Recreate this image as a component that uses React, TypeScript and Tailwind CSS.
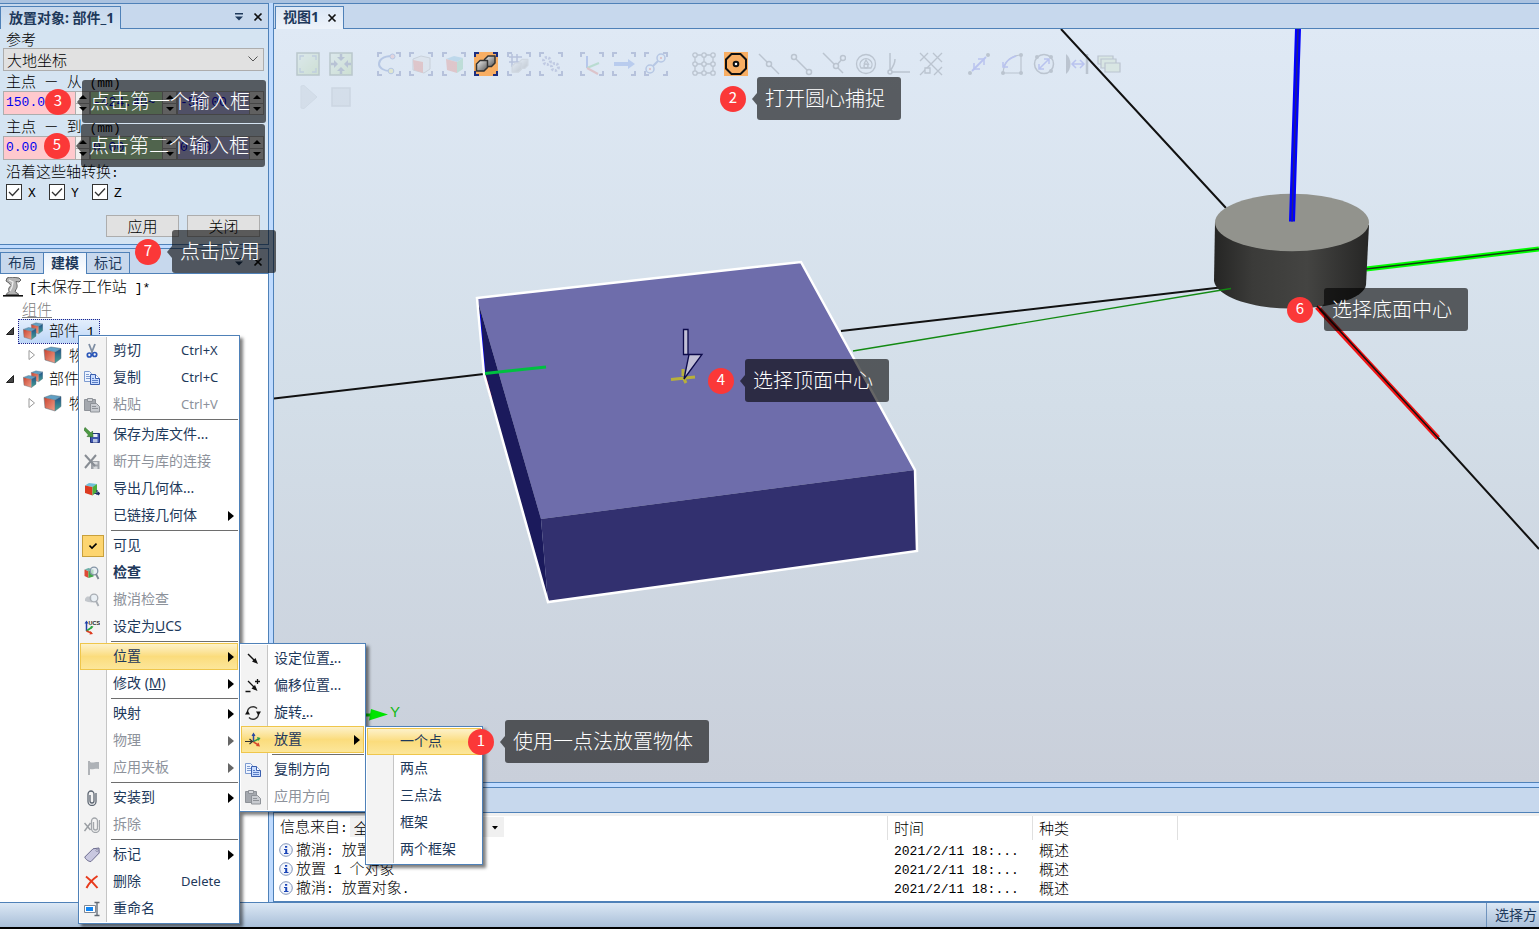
import { ReactNode } from 'react';
import clsx from 'clsx';

/* ---------- text ---------- */

// Chinese text with the latin runs set in a half-width monospace
function Song({ text }: { text: string }) {
    const parts = text.split(/([\x20-\x7e]+)/).filter(Boolean);
    return (
        <span className="whitespace-pre text-[15px] font-light font-['Noto_Sans_CJK_SC',sans-serif]">
            {parts.map((part, i) =>
                /^[\x20-\x7e]/.test(part) ? (
                    <span key={i} className="text-[13px] font-['Liberation_Mono',monospace]">{part}</span>
                ) : (
                    part
                )
            )}
        </span>
    );
}

/* ---------- menu icons ---------- */

function Svg({ children }: { children: ReactNode }) {
    return (
        <svg viewBox="0 0 16 16" className="mr-0.5 size-4 shrink-0" fill="none" aria-hidden="true">
            {children}
        </svg>
    );
}

const CutIcon = () => (
    <Svg>
        <path d="M5 1l3.5 9M11 1L7.5 10" stroke="#7f8ea3" strokeWidth="1.8" />
        <circle cx="5.3" cy="12" r="2" stroke="#2b57b8" strokeWidth="1.7" />
        <circle cx="10.7" cy="11.5" r="2" stroke="#2b57b8" strokeWidth="1.7" />
    </Svg>
);

const CopyIcon = () => (
    <Svg>
        <path d="M.5 1.500h5l2 2v8h-7z" fill="#eef4ff" stroke="#7d9bd0" />
        <path d="M2 4.500h3M2 6.500h4M2 8.500h4" stroke="#7d9bd0" />
        <path d="M6.500 4.500h5l4 4v6h-9z" fill="#c9dcff" stroke="#3a5fae" />
        <path d="M11.500 4.500v4h4" fill="#fff" stroke="#3a5fae" />
        <path d="M8 8.500h2M8 10.500h6M8 12.500h6" stroke="#5c7fc6" />
    </Svg>
);

const PasteIcon = () => (
    <Svg>
        <path d="M.5 2.500h11v11H.5z" fill="#a4a8ae" stroke="#8e9298" />
        <path d="M3.500 1.500h5v3h-5z" fill="#d4d6da" stroke="#8e9298" />
        <path d="M6.500 6.500h6l3 3v5.500h-9z" fill="#c8cbd0" stroke="#8e9298" />
        <path d="M8 9.500h4M8 11.500h6" stroke="#8e9298" />
    </Svg>
);

const SaveLibIcon = () => (
    <Svg>
        <path d="M6.500 6.500h9v9h-9z" fill="#3e55ad" stroke="#22347c" />
        <path d="M8.500 7h5v3h-5z" fill="#e7edf8" />
        <path d="M9 12h4.500v3.500H9z" fill="#b8c4e4" />
        <path d="M1 .5l6 5.500 1.500-2 .5 6-6-.5 1.500-1.500L0 3z" fill="#4d9a42" stroke="#2f6d28" strokeWidth=".6" />
    </Svg>
);

const UnlinkIcon = () => (
    <Svg>
        <path d="M7 7h8.500v8H7z" fill="#9ea2a8" />
        <path d="M9 8h4.500v2.500H9zM9.500 12.500h4v2.500h-4z" fill="#d9dbde" />
        <path d="M1 1l10 11M12 1L1 14" stroke="#888d94" strokeWidth="2" />
    </Svg>
);

const ExportIcon = () => (
    <Svg>
        <path d="M1 4.500L5 2l8 1-4 3z" fill="#6fc0d8" />
        <path d="M1 4.500L8.500 6v8.500L1 12z" fill="#dc3a20" />
        <path d="M8.500 6L13 3v8l-4.500 3.500z" fill="#4cae3b" />
        <path d="M13 9v5M10.500 12.500h5M14 11l1.500 1.500L14 14" stroke="#1d2f66" strokeWidth="1.200" />
    </Svg>
);

const CheckBoxIcon = () => (
    <span className="flex size-[22px] items-center justify-center border border-[#c8a03c] bg-[#fdd570]">
        <svg viewBox="0 0 8 8" className="size-2" fill="none" aria-hidden="true">
            <path d="M.5 3.500L3 6l4.500-4.500" stroke="#000" strokeWidth="1.6" />
        </svg>
    </span>
);

const ExamineIcon = ({ gray = false }: { gray?: boolean }) => (
    <Svg>
        {gray ? (
            <path d="M1 6.500l2-2h5v6l-4-.5-3-1z" fill="#c3c7cc" />
        ) : (
            <>
                <path d="M.5 4.500L4.500 6v7l-4-2z" fill="#df4a35" />
                <path d="M4.500 6l5-1.500v7L4.500 13z" fill="#42a948" />
                <path d="M.5 4.500l4-1.500 5 1.500-5 1.500z" fill="#6fb0a8" />
            </>
        )}
        <circle cx="10" cy="6" r="3.800" fill="#e4ecf4" fillOpacity=".7" stroke={gray ? '#a9aeb4' : '#8495a6'} strokeWidth="1.300" />
        <path d="M12 9l2.500 5" stroke={gray ? '#a9aeb4' : '#7d8791'} strokeWidth="1.800" />
    </Svg>
);

const UcsIcon = () => (
    <Svg>
        <path d="M2.500 3v9" stroke="#1f3fa8" strokeWidth="1.500" />
        <path d="M.5 4.500L2.500 1.500l2 3z" fill="#1f3fa8" />
        <path d="M2.500 12l5-3.500" stroke="#27a33d" strokeWidth="1.600" />
        <path d="M6.500 6.800l3 .7-2 2.500z" fill="#27a33d" />
        <path d="M2.500 12l5 2" stroke="#dd3b20" strokeWidth="1.600" />
        <path d="M6.500 12l2.500 3-3.500.5z" fill="#dd3b20" />
        <text x="4.500" y="5.500" fontSize="5.500" fontWeight="700" fill="#222" fontFamily="Liberation Sans, sans-serif">UCS</text>
    </Svg>
);

const FlagIcon = () => (
    <Svg>
        <path d="M5 1v14" stroke="#9a9ea3" strokeWidth="1.500" />
        <path d="M6 2c3 1.500 5-.5 9 0v7c-4-1-6 1-9 0z" fill="#aeb2b7" />
    </Svg>
);

const ClipIcon = ({ gray = false }: { gray?: boolean }) => (
    <Svg>
        <path
            d="M6 5v6a2 2 0 0 0 4 0V4a3 3 0 0 0-6 0v7.500a4 4 0 0 0 8 0V3"
            transform={gray ? 'translate(3.500 0)' : undefined}
            stroke={gray ? '#a2a6ab' : '#5d6672'}
            strokeWidth="1.300"
        />
        {gray && <path d="M.5 6l6 7M6.500 6l-6 8" stroke="#9a9ea3" strokeWidth="1.500" />}
    </Svg>
);

const TagIcon = () => (
    <Svg>
        <path d="M.8 10L9 1.800 15 1l.2 5L7 14.500c-2 .5-6-2.500-6.200-4.500z" fill="#c9c8e0" stroke="#6a6a8c" />
        <circle cx="13" cy="3.500" r="1" fill="#fff" stroke="#6a6a8c" strokeWidth=".7" />
    </Svg>
);

const DeleteIcon = () => (
    <Svg>
        <path d="M2 2.500c4 3 8 7 11.500 11.500M13.500 2C9 5 5 9 2.500 14" stroke="#e83a1c" strokeWidth="2" />
    </Svg>
);

const RenameIcon = () => (
    <Svg>
        <path d="M.5 4.500h11v7H.5z" fill="#fff" stroke="#7d8794" />
        <path d="M2 6h7v4H2z" fill="#1086f5" />
        <path d="M10.500 1.500h5M10.500 14.500h5M13 1.500v13" stroke="#5f6873" strokeWidth="1.300" />
    </Svg>
);

const SetPosIcon = () => (
    <Svg>
        <path d="M3 3l7 7" stroke="#111" strokeWidth="1.400" />
        <path d="M13 13l-6-2.500L10.500 7z" fill="#111" />
    </Svg>
);

const OffsetPosIcon = () => (
    <Svg>
        <path d="M3 3l6 6M.5 13.500h5M10 3.500h5M12.500 1v5" stroke="#111" strokeWidth="1.300" />
        <path d="M12.500 13l-6-2.500L10 7z" fill="#111" />
    </Svg>
);

const RotateIcon = () => (
    <Svg>
        <path d="M2.500 7.500a5.500 5.500 0 0 1 9.500-4M13.500 8.500a5.500 5.500 0 0 1-9.500 4" stroke="#333" strokeWidth="1.400" />
        <path d="M0 9.500L2.500 5.500 5 9.500zM11 6.500L13.500 10.500 16 6.500z" fill="#111" />
    </Svg>
);

const PlaceIcon = () => (
    <Svg>
        <path d="M8.500 2v8" stroke="#2d4aa0" strokeWidth="1.500" />
        <path d="M6.500 4l2-3.500 2 3.500z" fill="#2d4aa0" />
        <path d="M8.500 9.500l5-2.500" stroke="#2c9a48" strokeWidth="1.500" />
        <path d="M12 5l3.500 1-2 3z" fill="#2c9a48" />
        <path d="M8.500 10l5 3" stroke="#d7472b" strokeWidth="1.500" />
        <path d="M13.500 10.500l1.500 4-4-.5z" fill="#d7472b" />
        <path d="M0 9.500h7M4.500 7l3 2.500-3 2.500" stroke="#333" strokeWidth="1.200" />
    </Svg>
);

/* ---------- menus ---------- */

interface Item {
    label: ReactNode;
    icon?: ReactNode;
    keys?: string;
    sub?: boolean;
    disabled?: boolean;
    active?: boolean;
    bold?: boolean;
}

const SEP = 'sep';

const contextMenu: (Item | typeof SEP)[] = [
    { label: '剪切', keys: 'Ctrl+X', icon: <CutIcon /> },
    { label: '复制', keys: 'Ctrl+C', icon: <CopyIcon /> },
    { label: '粘贴', keys: 'Ctrl+V', icon: <PasteIcon />, disabled: true },
    SEP,
    { label: '保存为库文件...', icon: <SaveLibIcon /> },
    { label: '断开与库的连接', icon: <UnlinkIcon />, disabled: true },
    { label: '导出几何体...', icon: <ExportIcon /> },
    { label: '已链接几何体', sub: true },
    SEP,
    { label: '可见', icon: <CheckBoxIcon /> },
    { label: '检查', icon: <ExamineIcon />, bold: true },
    { label: '撤消检查', icon: <ExamineIcon gray />, disabled: true },
    { label: <>设定为<u>U</u>CS</>, icon: <UcsIcon /> },
    SEP,
    { label: '位置', sub: true, active: true },
    { label: <>修改 (<u>M</u>)</>, sub: true },
    SEP,
    { label: '映射', sub: true },
    { label: '物理', sub: true, disabled: true },
    { label: '应用夹板', icon: <FlagIcon />, sub: true, disabled: true },
    SEP,
    { label: '安装到', icon: <ClipIcon />, sub: true },
    { label: '拆除', icon: <ClipIcon gray />, disabled: true },
    SEP,
    { label: '标记', icon: <TagIcon />, sub: true },
    { label: '删除', keys: 'Delete', icon: <DeleteIcon /> },
    { label: '重命名', icon: <RenameIcon /> }
];

const positionMenu: (Item | typeof SEP)[] = [
    { label: <>设定位置<u>.</u>..</>, icon: <SetPosIcon /> },
    { label: '偏移位置...', icon: <OffsetPosIcon /> },
    { label: <>旋转<u>.</u>..</>, icon: <RotateIcon /> },
    { label: '放置', icon: <PlaceIcon />, sub: true, active: true },
    SEP,
    { label: '复制方向', icon: <CopyIcon /> },
    { label: '应用方向', icon: <PasteIcon />, disabled: true }
];

const placeMenu: (Item | typeof SEP)[] = [
    { label: '一个点', active: true },
    { label: '两点' },
    { label: '三点法' },
    { label: '框架' },
    { label: '两个框架' }
];

function Menu({ items, className }: { items: (Item | typeof SEP)[]; className: string }) {
    return (
        <ul
            role="menu"
            className={clsx(
                "absolute border border-[#4f81b8] bg-white p-px text-[14px] text-[#1e395b] shadow-[3px_3px_3px_rgba(0,0,0,0.5)] font-['Noto_Sans','Noto_Sans_CJK_SC',sans-serif]",
                className
            )}
        >
            {items.map((item, i) =>
                item === SEP ? (
                    <li key={i} role="separator" className="flex h-[3px]">
                        <span className="w-[27px] shrink-0 border-r border-[#c5c5c5] bg-[#f3f3f3]" />
                        <span className="ml-1 mt-px h-px flex-1 bg-[#6e6e6e]" />
                    </li>
                ) : (
                    <li key={i} role="none">
                        <button
                            role="menuitem"
                            disabled={item.disabled}
                            className={clsx(
                                'relative flex h-[27px] w-full items-center text-left leading-5',
                                item.disabled && 'text-[#8d929b]',
                                item.bold && 'font-bold',
                                item.active &&
                                    'bg-linear-to-b from-[#fdf3cf] via-[#fbdc7c] to-[#fce79c] outline outline-1 -outline-offset-1 outline-[#efc64b]'
                            )}
                        >
                            <span
                                className={clsx(
                                    'flex w-[27px] shrink-0 items-center justify-center self-stretch border-r',
                                    item.active ? 'border-transparent' : 'border-[#c5c5c5] bg-[#f3f3f3]'
                                )}
                            >
                                {item.icon}
                            </span>
                            <span className="flex-1 whitespace-nowrap pb-0.5 pl-1.5">{item.label}</span>
                            {item.keys && <span className="w-[57px] pb-0.5 text-[13px]">{item.keys}</span>}
                            {item.sub && (
                                <svg viewBox="0 0 6 10" className="mr-1 h-2.5 w-1.5" aria-hidden="true">
                                    <path d="M0 0l6 5-6 5z" fill={item.disabled ? '#666' : '#000'} />
                                </svg>
                            )}
                        </button>
                    </li>
                )
            )}
        </ul>
    );
}

function Callout({ n, text, className }: { n: number; text: string; className: string }) {
    return (
        <div className={clsx("absolute flex items-center font-['Noto_Sans_CJK_SC',sans-serif]", className)}>
            <span className="flex size-[26px] items-center justify-center rounded-full bg-[#fb3838] pb-0.5 text-[15px] text-white">{n}</span>
            <svg viewBox="0 0 5 12" className="ml-1.5 h-3 w-[5px]" aria-hidden="true">
                <path d="M5 0v12L0 6z" fill="#000" fillOpacity=".6" />
            </svg>
            <span className="flex h-[43px] items-center whitespace-nowrap rounded-[3px] bg-black/60 pr-4 pb-px pl-2 text-[20px] font-light text-white">
                {text}
            </span>
        </div>
    );
}

/* ---------- left side ---------- */

function PanelButtons() {
    return (
        <div className="ml-auto flex items-center gap-2.5 pt-0.5 pr-[5px]">
            <button aria-label="菜单">
                <svg viewBox="0 0 8 8" className="size-2" aria-hidden="true">
                    <path d="M0 0h8v1.500H0zM0 3.500h8L4 7.500z" fill="#1e395b" />
                </svg>
            </button>
            <CloseX />
        </div>
    );
}

function CloseX() {
    return (
        <button aria-label="关闭标签">
            <svg viewBox="0 0 10 10" className="size-2.5" fill="none" aria-hidden="true">
                <path d="M1.500 1.500l7 7M8.500 1.500l-7 7" stroke="#111" strokeWidth="1.700" />
            </svg>
        </button>
    );
}

function Stepper({ value, label, color }: { value: string; label: string; color: string }) {
    return (
        <div className="flex min-w-0 flex-1">
            <input
                aria-label={label}
                defaultValue={value}
                className={clsx(
                    "w-0 min-w-0 flex-1 border border-r-0 border-[#adadad] pl-0.5 text-[13px] text-[#0000f0] font-['Liberation_Mono',monospace]",
                    color
                )}
            />
            <div className="flex w-[15px] flex-col border border-[#adadad] bg-[#f0f0f0]">
                <button aria-label={`${label} +`} className="flex flex-1 items-center justify-center border-b border-[#adadad]">
                    <svg viewBox="0 0 8 4" className="h-1 w-2" aria-hidden="true"><path d="M4 0l4 4H0z" /></svg>
                </button>
                <button aria-label={`${label} -`} className="flex flex-1 items-center justify-center">
                    <svg viewBox="0 0 8 4" className="h-1 w-2" aria-hidden="true"><path d="M0 0h8L4 4z" /></svg>
                </button>
            </div>
        </div>
    );
}

function Vector({ name, values }: { name: string; values: string[] }) {
    return (
        <div className="flex h-6">
            <Stepper label={`${name} X`} value={values[0]} color="bg-[#ffc9cd]" />
            <Stepper label={`${name} Y`} value={values[1]} color="bg-[#c8fbc0]" />
            <Stepper label={`${name} Z`} value={values[2]} color="bg-[#c8c8ff]" />
        </div>
    );
}

function AxisCheck({ name }: { name: string }) {
    return (
        <label className="relative flex w-[43px] items-center gap-1.5">
            <input type="checkbox" defaultChecked className="peer size-4 appearance-none border border-[#333] bg-white" />
            <svg viewBox="0 0 16 16" className="pointer-events-none absolute left-0 hidden size-4 peer-checked:block" fill="none" aria-hidden="true">
                <path d="M3 8l3.500 3.500L13 4.500" stroke="#333" strokeWidth="1.300" />
            </svg>
            <Song text={name} />
        </label>
    );
}

function PlacePanel() {
    return (
        <section className="flex h-[242px] flex-col border-y border-r border-[#4f81b8] bg-[#d5e4f2]">
            <header className="flex h-[25px] shrink-0 border-b border-[#4f81b8] bg-[#c7d8ed]">
                <h2 className="mt-0.5 -mb-px flex items-center border-x border-t border-[#4f81b8] bg-linear-to-b from-[#c7d8ed] to-[#d5e4f2] pr-1.5 pb-0.5 pl-2 text-[14px] font-bold text-[#1e395b]">
                    放置对象: 部件_1
                </h2>
                <PanelButtons />
            </header>
            <form className="flex flex-col pl-[3px] pr-1" onSubmit={(e) => e.preventDefault()}>
                <label htmlFor="ref" className="flex h-[19px] items-center pt-0.5 pl-[3px]"><Song text="参考" /></label>
                <div className="relative flex h-[23px]">
                    <select id="ref" className="w-full appearance-none border border-[#adadad] bg-[#e1e1e1] pb-0.5 pl-[3px] text-[15px] font-light font-['Noto_Sans_CJK_SC',sans-serif]">
                        <option>大地坐标</option>
                    </select>
                    <svg viewBox="0 0 10 6" className="pointer-events-none absolute top-2 right-1.5 h-1.5 w-2.5" fill="none" aria-hidden="true">
                        <path d="M.5.5L5 5 9.500.5" stroke="#555" />
                    </svg>
                </div>
                <div className="flex h-5 items-center pt-0.5 pl-[3px]"><Song text="主点 － 从 (mm)" /></div>
                <Vector name="从" values={['150.00', '-424.40~', '-50.00']} />
                <div className="flex h-[21px] items-center pt-0.5 pl-[3px]"><Song text="主点 － 到 (mm)" /></div>
                <Vector name="到" values={['0.00', '0.00', '0.00']} />
                <fieldset>
                    <legend className="flex h-6 items-center pl-[3px]"><Song text="沿着这些轴转换:" /></legend>
                    <div className="flex h-4 pl-[3px]">
                        <AxisCheck name="X" />
                        <AxisCheck name="Y" />
                        <AxisCheck name="Z" />
                    </div>
                </fieldset>
                <div className="mt-[15px] flex justify-end gap-2 pr-1">
                    <button className="flex h-[22px] w-[73px] items-center justify-center border border-[#adadad] bg-[#e1e1e1]">
                        <Song text="应用" />
                    </button>
                    <button className="flex h-[22px] w-[73px] items-center justify-center border border-[#adadad] bg-[#e1e1e1]">
                        <Song text="关闭" />
                    </button>
                </div>
            </form>
        </section>
    );
}

const Cube = () => (
    <g>
        <path d="M1 4.500L8 2l10 1.500-6 3.500z" fill="#5f9fc4" />
        <path d="M1 4.500L12 7v11L2 15z" fill="url(#cubeRed)" />
        <path d="M12 7l6-3.500v10L12 18z" fill="url(#cubeBlue)" />
        <path d="M1 4.500L8 2l10 1.500v10L12 18 2 15zM1 4.500L12 7l6-3.500M12 7v11" fill="none" stroke="#58707e" strokeOpacity=".5" />
    </g>
);

const SolidIcon = () => (
    <svg viewBox="0 0 20 20" className="size-5" aria-hidden="true"><Cube /></svg>
);

const PartIcon = () => (
    <svg viewBox="0 0 20 18" className="h-[18px] w-5" aria-hidden="true">
        <g transform="translate(7.500 -.5) scale(.68)"><Cube /></g>
        <g transform="translate(-.5 4) scale(.75)"><Cube /></g>
    </svg>
);

function RobotIcon() {
    return (
        <svg viewBox="0 0 20 20" className="size-5" aria-hidden="true">
            <path d="M4 1c3-1.500 8-.5 12 0l2 2-2 2-3-.5c1 3 2 5 0 8l-1 2 4 3H3l3-3c-1-3 0-4 2-6L6 6 3 4z" fill="#b4b4b4" stroke="#555" strokeWidth=".9" />
            <path d="M6 3l4 2-1 5-2 4" stroke="#eee" fill="none" strokeWidth="1.300" />
            <path d="M0 18.800h20" stroke="#111" strokeWidth="1.600" />
        </svg>
    );
}

const Opened = () => (
    <svg viewBox="0 0 8 8" className="size-2" aria-hidden="true"><path d="M7.500.5v7h-7z" fill="#444" stroke="#222" /></svg>
);
const Closed = () => (
    <svg viewBox="0 0 8 12" className="h-3 w-2" aria-hidden="true"><path d="M1 1.500L6.500 6 1 10.500z" fill="#fff" stroke="#999" /></svg>
);

function ModelPanel() {
    const tab = 'flex items-center border-x border-t border-[#4f81b8] px-[7px] pb-0.5 text-[14px] text-[#1e395b]';
    const solid = (
        <li className="flex h-6 items-center pl-7">
            <Closed />
            <span className="flex items-center gap-1.5 pl-[7px]"><SolidIcon /><Song text="物体" /></span>
        </li>
    );
    return (
        <section className="flex min-h-0 flex-1 flex-col border-t border-r border-[#4f81b8] bg-white">
            <header className="flex h-[25px] shrink-0 border-b border-[#4f81b8] bg-[#c7d8ed]">
                <div role="tablist" className="mt-[3px] flex">
                    <button role="tab" className={clsx(tab, 'border-r-0')}>布局</button>
                    <button role="tab" aria-selected="true" className={clsx(tab, '-mb-px border-r-0 bg-linear-to-b from-[#e8f1fb] to-white font-bold')}>建模</button>
                    <button role="tab" className={tab}>标记</button>
                </div>
                <PanelButtons />
            </header>
            <ul className="pt-px">
                <li className="flex h-6 items-center gap-1.5 pl-[3px]"><RobotIcon /><Song text="[未保存工作站 ]*" /></li>
                <li className="flex h-5 items-center pl-[22px] text-[#808080] underline underline-offset-2"><Song text="组件" /></li>
                <li className="flex h-6 items-center gap-1 pl-1.5">
                    <Opened />
                    <span className="flex h-[25px] items-center gap-1.5 border border-dotted border-[#22228a] bg-linear-to-b from-[#e3eefc] to-[#bcd6f7] px-1">
                        <PartIcon /><Song text="部件_1" />
                    </span>
                </li>
                {solid}
                <li className="flex h-6 items-center gap-[9px] pl-1.5">
                    <Opened />
                    <span className="flex items-center gap-1.5"><PartIcon /><Song text="部件_2" /></span>
                </li>
                {solid}
            </ul>
        </section>
    );
}

/* ---------- 3D view ---------- */

const Corners = () => (
    <path d="M1 5V1h4M19 1h4v4M23 19v4h-4M5 23H1v-4" stroke="#1d2f80" strokeWidth="2" fill="none" />
);

const Blobs = ({ stroke = '#333' }: { stroke?: string }) => (
    <>
        <path d="M10.500 7.500L14 4h7v7l-3.500 3.500h-7z" fill="url(#steel)" stroke={stroke} strokeWidth="1.500" strokeLinejoin="round" />
        <path d="M2.500 12L6 8.500h7.500v7L10 19H2.500z" fill="url(#steel)" stroke={stroke} strokeWidth="1.500" strokeLinejoin="round" />
    </>
);

const DARK = '#333a45';

const tools: { name: string; on?: boolean; art: ReactNode }[][] = [
    [
        { name: '查看全部', art: <><path d="M1 1h22v22H1z" fill="url(#leaf)" stroke="#2e4a30" strokeWidth="1.500" /><path d="M4 8V4h4M16 4h4v4M20 16v4h-4M8 20H4v-4" stroke="#4a6a90" strokeWidth="1.300" /></> },
        { name: '查看中心', art: <><path d="M1 1h22v22H1z" fill="url(#leaf)" stroke="#2e4a30" strokeWidth="1.500" /><path d="M12 2v5M12 22v-5M2 12h5M22 12h-5" stroke="#25365c" strokeWidth="2.500" /><path d="M8 5h8l-4 4zM8 19h8l-4-4zM5 8v8l4-4zM19 8v8l-4-4z" fill="#25365c" /></> }
    ],
    [
        { name: '选择曲线', art: <><Corners /><path d="M15 4C6 4 2 8 2 12s5 7 11 7" stroke="#1a46a8" strokeWidth="2" /><circle cx="15.500" cy="4.500" r="2.500" fill="#e88" stroke="#1a46a8" /><circle cx="14" cy="19" r="2.800" fill="#e6e04a" stroke="#1a46a8" /></> },
        { name: '选择表面', art: <><Corners /><path d="M4 7l8-3 9 2v11l-6 4-11-3z" fill="#d8d8d8" stroke="#777" /><path d="M4 8l10 2v11L5 18z" fill="#e0422c" /></> },
        { name: '选择物体', art: <><Corners /><path d="M4 7l8-3 9 2-6 4z" fill="#3f9ac9" /><path d="M4 7l11 3v11L5 18z" fill="#e0422c" /><path d="M15 10l6-4v11l-6 4z" fill="#45b56c" /></> },
        { name: '选择部件', on: true, art: <><path d="M0 0h24v24H0z" fill="#f8ae63" /><Blobs /><Corners /></> },
        { name: '选择组', art: <><path d="M2 5h13M2 10h11M5 2v13M10 2v8" stroke="#1d2f80" strokeWidth="1.500" /><g transform="translate(3 4) scale(.85)"><Blobs stroke="#999" /></g><Corners /></> },
        { name: '选择机械装置', art: <><Corners /><circle cx="8" cy="9" r="3.500" stroke="#4b55a0" strokeWidth="3" strokeDasharray="2 1.500" /><circle cx="16" cy="15" r="3.500" stroke="#4b55a0" strokeWidth="3" strokeDasharray="2 1.500" /></> }
    ],
    [
        { name: '选择目标点', art: <><Corners /><path d="M7 4v12" stroke="#1a46c8" strokeWidth="2" /><path d="M7 16l12-5" stroke="#2bb04a" strokeWidth="2" /><path d="M7 16l11 6" stroke="#d93a2a" strokeWidth="2" /></> },
        { name: '选择移动指令', art: <><Corners /><path d="M2 10h14V7l7 5-7 5v-3H2z" fill="#2c62d8" /></> },
        { name: '选择路径', art: <><Corners /><circle cx="6" cy="17" r="4" stroke="#1a46a8" strokeWidth="1.500" /><circle cx="17" cy="6" r="4" stroke="#1a46a8" strokeWidth="1.500" /><path d="M9 14l5-5" stroke="#1a46a8" strokeWidth="2" /><path d="M5 16h2v2H5zM16 5h2v2h-2z" fill="#d93a2a" /></> }
    ],
    [
        { name: '捕捉对象', art: <g stroke={DARK} strokeWidth="1.300"><path d="M3 3h18v18H3zM3 12h18M12 3v18" />{[3, 12, 21].map((x) => [3, 12, 21].map((y) => <circle key={`${x}-${y}`} cx={x} cy={y} r="2.200" fill="#e4ecf4" />))}</g> },
        { name: '捕捉中心', on: true, art: <><path d="M0 0h24v24H0z" fill="#f8ae63" /><path d="M7.500 2h9L22 7.500v9L16.500 22h-9L2 16.500v-9z" stroke="#111" strokeWidth="2" /><circle cx="12" cy="12" r="2.300" fill="#fff" stroke="#111" strokeWidth="2" /></> },
        { name: '捕捉中点', art: <><path d="M2 2l20 20" stroke={DARK} strokeWidth="1.500" /><circle cx="12" cy="12" r="2.500" fill="#e4ecf4" stroke={DARK} strokeWidth="1.500" /></> },
        { name: '捕捉末端', art: <><path d="M5 5l15 15" stroke={DARK} strokeWidth="1.500" /><circle cx="5" cy="5" r="2.500" fill="#e4ecf4" stroke={DARK} strokeWidth="1.500" /><circle cx="20" cy="20" r="2.500" fill="#e4ecf4" stroke={DARK} strokeWidth="1.500" /></> },
        { name: '捕捉边缘', art: <><path d="M1 1l20 20M14 14l7-8" stroke={DARK} strokeWidth="1.500" /><circle cx="14" cy="14" r="2.500" fill="#e4ecf4" stroke={DARK} strokeWidth="1.500" /><circle cx="21" cy="6" r="2.500" fill="#e4ecf4" stroke={DARK} strokeWidth="1.500" /></> },
        { name: '捕捉重心', art: <g stroke={DARK} strokeWidth="1.300"><circle cx="12" cy="12" r="9.500" /><circle cx="12" cy="14" r="2" /><path d="M7 16a6 6 0 1 1 10 0zM10 12l2-4 3 5" /></g> },
        { name: '捕捉本地原点', art: <g stroke={DARK} strokeWidth="1.500"><path d="M3 1v19h20M3 19c3-4 5-7 5-12" /><circle cx="3" cy="20" r="2" fill="#e4ecf4" /></g> },
        { name: '捕捉网格', art: <g stroke={DARK} strokeWidth="1.300"><path d="M1 9L9 1M1 23L23 1M15 23l8-8M1 1l22 22M14 1l9 9" /><path d="M6 16h5v5H6z" fill="#e4ecf4" /></g> }
    ],
    [
        { name: '点到点', art: <><path d="M5 19L19 5" stroke="#2a35e0" strokeWidth="1.800" /><path d="M7 11v6h6M17 13V7h-6" stroke="#2a35e0" strokeWidth="1.500" /><circle cx="3" cy="21" r="2" fill={DARK} /><circle cx="21" cy="3" r="2" fill={DARK} /></> },
        { name: '角度', art: <><path d="M3 21C4 10 10 4 21 3v18H3z" stroke={DARK} strokeWidth="1.200" /><path d="M4 14C6 9 10 6 16 4M3 10v5h5" stroke="#2a35e0" strokeWidth="1.500" /><circle cx="3" cy="21" r="2" fill={DARK} /><circle cx="21" cy="3" r="2" fill={DARK} /><circle cx="21" cy="21" r="2" fill={DARK} /></> },
        { name: '直径', art: <><circle cx="12" cy="12" r="9.500" stroke={DARK} strokeWidth="1.500" /><path d="M7 17L17 7M7 12v5h5M17 12V7h-5" stroke="#2a35e0" strokeWidth="1.500" /><circle cx="5" cy="5" r="2" fill={DARK} /><circle cx="19" cy="5" r="2" fill={DARK} /><circle cx="19" cy="19" r="2" fill={DARK} /></> },
        { name: '最短距离', art: <><path d="M1 2c6 5 6 15 0 20z" fill={DARK} /><path d="M22 2v20" stroke={DARK} strokeWidth="2.500" /><path d="M7 12h12M11 8l-4 4 4 4M15 8l4 4-4 4" stroke="#2a35e0" strokeWidth="1.500" /></> },
        { name: '保持测量', art: <g fill="#c5dfa5" stroke={DARK} strokeWidth="1.200"><path d="M1 4h15v8H1z" /><path d="M4 7h15v9H4z" /><path d="M8 11h15v9H8z" /></g> }
    ]
];

function Tool({ name, on, art }: { name: string; on?: boolean; art: ReactNode }) {
    return (
        <button aria-label={name} className={clsx('size-6', !on && 'opacity-20')}>
            <svg viewBox="0 0 24 24" className="size-6" fill="none" aria-hidden="true">{art}</svg>
        </button>
    );
}

const groupWidth = ['w-[57px]', 'w-[186px] ml-6', 'w-[88px] ml-[17px]', 'w-[251px] ml-6', 'w-[154px] ml-6'];

function Scene() {
    return (
        <svg viewBox="274 29 1265 754" preserveAspectRatio="xMinYMin slice" className="absolute inset-0 size-full" fill="none" aria-label="三维视图">
            <defs>
                <linearGradient id="barrel" x1="0" x2="1">
                    <stop offset="0" stopColor="#252524" />
                    <stop offset=".25" stopColor="#3b3b39" />
                    <stop offset=".6" stopColor="#444442" />
                    <stop offset="1" stopColor="#262625" />
                </linearGradient>
                <linearGradient id="steel" x1="0" y1="0" x2="1" y2="1">
                    <stop offset="0" stopColor="#f2f2f2" />
                    <stop offset="1" stopColor="#555" />
                </linearGradient>
                <linearGradient id="leaf" x1="0" y1="0" x2="1" y2="1">
                    <stop offset="0" stopColor="#d4ebd2" />
                    <stop offset="1" stopColor="#8cbf52" />
                </linearGradient>
                <linearGradient id="cubeRed" x1="0" y1="0" x2="1" y2="1">
                    <stop offset="0" stopColor="#c9432f" />
                    <stop offset="1" stopColor="#f0a08a" />
                </linearGradient>
                <linearGradient id="cubeBlue" x1="0" y1="0" x2="0" y2="1">
                    <stop offset="0" stopColor="#1d4f8c" />
                    <stop offset="1" stopColor="#49a592" />
                </linearGradient>
            </defs>

            {/* floor lines */}
            <g stroke="#111" strokeWidth="2">
                <path d="M1061 29L1226 208M274 398.500L484 374M841 331L1220 287.500M1400 396L1539 549" />
            </g>

            {/* box */}
            <path d="M477 298L801 262 915 470 541 519z" fill="#6e6dab" />
            <path d="M477 298L541 519 548 602 484 374z" fill="#1b1a5c" />
            <path d="M541 519L915 470 917 551 548 602z" fill="#32306f" />
            <path d="M479.500 314L484.500 372" stroke="#00f" strokeWidth="2" />
            <path d="M485 376L491 398" stroke="#b0103a" strokeWidth="2" />
            <path d="M477 298L801 262 915 470 917 551 548 602 484 374z" stroke="#fff" strokeWidth="2.500" />
            <path d="M485 373.500L546 367" stroke="#00c040" strokeWidth="3" />
            <path d="M671 379.500L695 377M683 369v7M683 377l3 6" stroke="#b8b03a" strokeWidth="3" />
            <path d="M683.500 329.500h4.500v25h-4.500zM689 354.500h13L684 379z" fill="#c1bfd6" stroke="#0c0a4a" strokeWidth="1.300" />

            {/* cylinder */}
            <path d="M1366 269L1539 249" stroke="#0f0" strokeWidth="5" />
            <path d="M1366 269L1539 249" stroke="#143c14" strokeWidth="1.500" />
            <path d="M1215 222L1214 281C1217 297 1252 308.500 1290 308.500 1332 308.500 1364 298 1366 285L1369 225z" fill="url(#barrel)" />
            <ellipse cx="1292" cy="222.500" rx="77" ry="28.800" fill="#92938d" />
            <path d="M1298 29L1292 221.500" stroke="#00f" strokeWidth="6" />
            <path d="M1298 29L1292 221.500" stroke="#22228c" strokeWidth="1.500" />
            <path d="M853 351L1231 288.500" stroke="#138a13" strokeWidth="1.300" />
            <path d="M1317 307L1438 438" stroke="#f01414" strokeWidth="5" />
            <path d="M1317 306L1440 440" stroke="#111" strokeWidth="1.500" />

            {/* orientation marker */}
            <path d="M360 715h12" stroke="#0c0" strokeWidth="3" />
            <path d="M371 709l17 5.500-19 6z" fill="#00e400" />
            <text x="390" y="717" fontSize="15" fill="#12b812" fontFamily="Liberation Sans, sans-serif">Y</text>
        </svg>
    );
}

function View() {
    return (
        <section className="flex min-h-0 flex-1 flex-col border-y border-l border-[#4f81b8]">
            <header className="flex h-[25px] shrink-0 border-b border-[#4f81b8] bg-[#c7d8ed] pl-px">
                <h2 className="mt-0.5 -mb-px flex items-center gap-2 border-x border-t border-[#4f81b8] bg-linear-to-b from-[#dde8f6] to-[#edf3fa] px-[7px] pr-1.5 text-[14px] font-bold text-[#1e395b]">
                    <span className="pb-[3px]">视图1</span> <CloseX />
                </h2>
            </header>
            <div className="relative min-h-0 flex-1 overflow-hidden bg-linear-to-b from-[#dfe9f5] via-[#d3dee8] to-[#c9cfda]">
                <Scene />
                <div role="toolbar" className="relative flex pt-[23px] pl-[22px]">
                    {tools.map((group, i) => (
                        <div key={i} className={clsx('flex shrink-0 justify-between', groupWidth[i])}>
                            {group.map((tool) => <Tool key={tool.name} {...tool} />)}
                        </div>
                    ))}
                </div>
                <div role="toolbar" className="relative mt-[9px] ml-[22px] flex w-[57px] justify-between">
                    <Tool name="播放" art={<path d="M5 1l3-.5L21 12 8 23.500 5 23z" fill="#b4bec9" stroke="#9aa6b2" />} />
                    <Tool name="停止" art={<path d="M3 3h18v18H3z" fill="#b4bec9" stroke="#8a96a4" strokeWidth="1.500" />} />
                </div>
            </div>
        </section>
    );
}

/* ---------- output ---------- */

const messages = ['撤消: 放置对象.', '放置 1 个对象', '撤消: 放置对象.'];

function InfoIcon() {
    return (
        <svg viewBox="0 0 14 14" className="size-3.5 shrink-0" aria-hidden="true">
            <circle cx="7" cy="7" r="6.300" fill="#f3f6fc" stroke="#7f93b8" />
            <path d="M6 3h2.200v1.800H6zM5 6h3.200v4H9.500v1H5v-1h1.200V7H5z" fill="#1c46b8" />
        </svg>
    );
}

function Output() {
    const th = 'h-6 border-r border-[#e0e0e0] p-0 pl-1.5 text-left align-top font-normal';
    return (
        <section className="flex h-[115px] shrink-0 flex-col border-y border-l border-[#4f81b8] bg-white">
            <header className="h-[25px] shrink-0 border-b border-[#4f81b8] bg-[#c7d8ed]" />
            <div className="h-[3px] shrink-0 bg-[#f0f0f0]" />
            <table className="w-full table-fixed border-separate border-spacing-0 leading-[19px]">
                <colgroup>
                    <col className="w-[614px]" />
                    <col className="w-[145px]" />
                    <col className="w-[145px]" />
                    <col />
                </colgroup>
                <thead>
                    <tr>
                        <th className={th}>
                            <div className="flex h-[22px] items-center gap-0.5">
                                <label htmlFor="source"><Song text="信息来自:" /></label>
                                <div className="relative flex">
                                    <select id="source" className="h-5 w-[154px] appearance-none bg-[#f0f0f0] pl-1 text-[15px] font-light font-['Noto_Sans_CJK_SC',sans-serif]">
                                        <option>全部信息</option>
                                    </select>
                                    <svg viewBox="0 0 6 4" className="pointer-events-none absolute top-[9px] right-1.5 h-1 w-1.5" aria-hidden="true">
                                        <path d="M0 0h6L3 3.500z" />
                                    </svg>
                                </div>
                            </div>
                        </th>
                        <th className={th}><div className="flex h-[22px] items-center"><Song text="时间" /></div></th>
                        <th className={th}><div className="flex h-[22px] items-center"><Song text="种类" /></div></th>
                        <th className="p-0" />
                    </tr>
                </thead>
                <tbody>
                    {messages.map((message, i) => (
                        <tr key={i} className="h-[19px]">
                            <td className="p-0 pl-[5px]">
                                <div className="flex h-[19px] items-center gap-[3px]"><InfoIcon /><Song text={message} /></div>
                            </td>
                            <td className="p-0 pl-1.5"><div className="flex h-[19px] items-center"><Song text="2021/2/11 18:..." /></div></td>
                            <td className="p-0 pl-1.5"><div className="flex h-[19px] items-center"><Song text="概述" /></div></td>
                            <td className="p-0" />
                        </tr>
                    ))}
                </tbody>
            </table>
        </section>
    );
}

export default function App() {
    return (
        <div className="relative flex h-screen flex-col overflow-hidden border-b-2 border-black bg-[#bfdbff] font-['Noto_Sans','Noto_Sans_CJK_SC',sans-serif] text-black">
            <div className="h-[3px] shrink-0 bg-[#aac2e0]" />
            <main className="flex min-h-0 flex-1">
                <div className="flex w-[269px] shrink-0 flex-col gap-[3px]">
                    <PlacePanel />
                    <ModelPanel />
                </div>
                <div className="ml-1 flex min-w-0 flex-1 flex-col gap-1">
                    <View />
                    <Output />
                </div>
            </main>
            <footer className="flex h-[25px] shrink-0 justify-end border-t border-[#4f81b8] bg-linear-to-b from-[#dce8f5] to-[#a9bfd8]">
                <div className="flex items-center border-l border-[#6f93bd] pr-0.5 pb-0.5 pl-2 text-[14px] whitespace-nowrap text-[#1e395b]">
                    选择方
                </div>
            </footer>

            <Menu items={contextMenu} className="top-[335px] left-[78px] w-[162px]" />
            <Menu items={positionMenu} className="top-[643px] left-[239px] w-[127px]" />
            <Menu items={placeMenu} className="top-[726px] left-[365px] w-[118px]" />

            <Callout n={1} text="使用一点法放置物体" className="top-[720px] left-[468px]" />
            <Callout n={2} text="打开圆心捕捉" className="top-[77px] left-[720px]" />
            <Callout n={3} text="点击第一个输入框" className="top-[80px] left-[45px]" />
            <Callout n={4} text="选择顶面中心" className="top-[359px] left-[708px]" />
            <Callout n={5} text="点击第二个输入框" className="top-[124px] left-[44px]" />
            <Callout n={6} text="选择底面中心" className="top-[288px] left-[1287px]" />
            <Callout n={7} text="点击应用" className="top-[230px] left-[135px]" />
        </div>
    );
}
